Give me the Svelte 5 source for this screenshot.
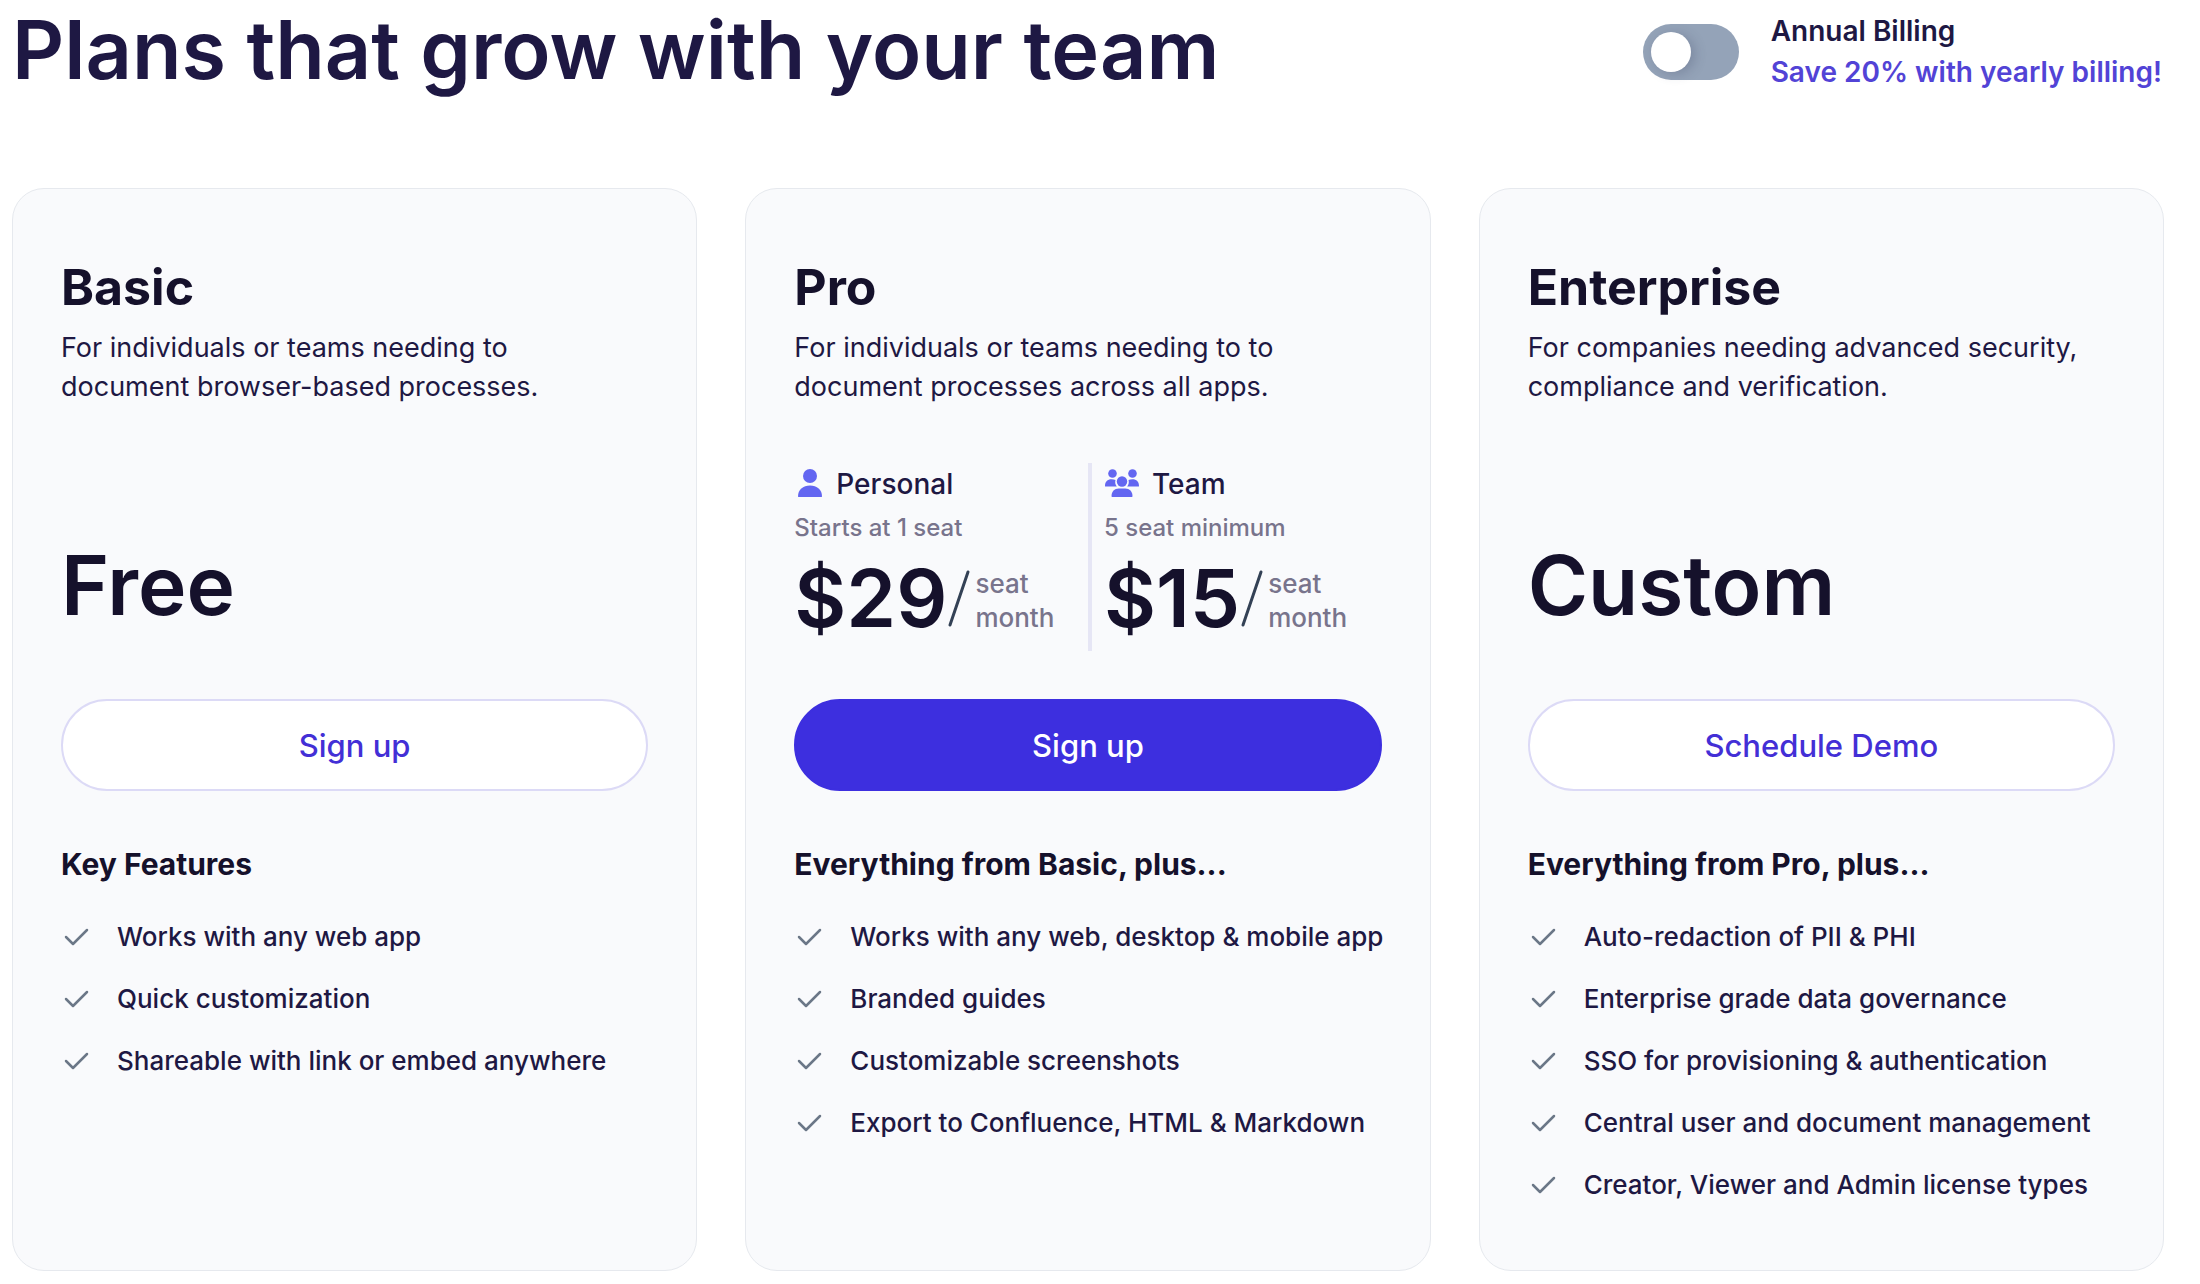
<script lang="ts">
	/**
	 * Pricing page
	 * Header with billing toggle, followed by the three plan cards
	 */

	interface Seat {
		icon: 'person' | 'group';
		label: string;
		note: string;
		price: string;
	}

	interface Plan {
		name: string;
		description: string;
		price?: string;
		seats?: Seat[];
		cta: string;
		primary?: boolean;
		featuresTitle: string;
		features: string[];
	}

	const plans: Plan[] = [
		{
			name: 'Basic',
			description: 'For individuals or teams needing to document browser-based processes.',
			price: 'Free',
			cta: 'Sign up',
			featuresTitle: 'Key Features',
			features: ['Works with any web app', 'Quick customization', 'Shareable with link or embed anywhere']
		},
		{
			name: 'Pro',
			description: 'For individuals or teams needing to to document processes across all apps.',
			seats: [
				{ icon: 'person', label: 'Personal', note: 'Starts at 1 seat', price: '$29' },
				{ icon: 'group', label: 'Team', note: '5 seat minimum', price: '$15' }
			],
			cta: 'Sign up',
			primary: true,
			featuresTitle: 'Everything from Basic, plus...',
			features: [
				'Works with any web, desktop & mobile app',
				'Branded guides',
				'Customizable screenshots',
				'Export to Confluence, HTML & Markdown'
			]
		},
		{
			name: 'Enterprise',
			description: 'For companies needing advanced security, compliance and verification.',
			price: 'Custom',
			cta: 'Schedule Demo',
			featuresTitle: 'Everything from Pro, plus...',
			features: [
				'Auto-redaction of PII & PHI',
				'Enterprise grade data governance',
				'SSO for provisioning & authentication',
				'Central user and document management',
				'Creator, Viewer and Admin license types'
			]
		}
	];

	let annual = $state(false);
</script>

<main class="pricing">
	<header class="pricing-header">
		<h1>Plans that grow with your team</h1>
		<label class="billing">
			<input class="toggle" type="checkbox" role="switch" bind:checked={annual} />
			<span class="billing-text">
				<span>Annual Billing</span>
				<span class="billing-save">Save 20% with yearly billing!</span>
			</span>
		</label>
	</header>

	<div class="plans">
		{#each plans as plan}
			<section class="plan">
				<h2>{plan.name}</h2>
				<p class="description">{plan.description}</p>

				<div class="pricing-area">
					{#if plan.seats}
						{#each plan.seats as seat}
							<div class="seat">
								<div class="seat-label">
									{#if seat.icon === 'person'}
										<svg class="seat-icon person" viewBox="0 0 30 32" aria-hidden="true">
											<circle cx="16" cy="8" r="7" />
											<path d="M4 28.500C4 21.500 9 17.500 16 17.500s12 4 12 11c0 .300-.200.500-.500.500h-23c-.300 0-.500-.200-.500-.500z" />
										</svg>
									{:else}
										<svg class="seat-icon group" viewBox="0 0 36 32" aria-hidden="true">
											<circle cx="8.500" cy="5.500" r="4.300" />
											<circle cx="28.500" cy="5.500" r="4.300" />
											<circle cx="18" cy="13.500" r="5.200" />
											<path d="M1 18c0-4.500 2.500-6.800 6.500-6.800 1.600 0 2.900.300 4 .900-.700 2.300-.200 4.600 1.300 6.500H1.600c-.400 0-.600-.200-.600-.600z" />
											<path d="M35 18c0-4.500-2.500-6.800-6.500-6.800-1.600 0-2.900.300-4 .900.700 2.300.200 4.600-1.300 6.500h11.200c.400 0 .600-.200.600-.600z" />
											<path d="M7.500 28.300c0-5 3-7.800 7.200-7.800h6.600c4.200 0 7.200 2.800 7.200 7.800 0 .400-.300.700-.700.700H8.200c-.400 0-.700-.300-.700-.700z" />
										</svg>
									{/if}
									{seat.label}
								</div>
								<div class="seat-note">{seat.note}</div>
								<div class="seat-price">
									<span class="amount">{seat.price}</span>
									<svg class="slash" viewBox="0 0 24 60" aria-hidden="true">
										<path d="M3 57L21 4" />
									</svg>
									<span class="unit">
										<span>seat</span>
										<span>month</span>
									</span>
								</div>
							</div>
						{/each}
					{:else}
						<span class="amount flat">{plan.price}</span>
					{/if}
				</div>

				<button class="cta" class:primary={plan.primary} type="button">{plan.cta}</button>

				<h3>{plan.featuresTitle}</h3>
				<ul class="features">
					{#each plan.features as feature}
						<li>
							<svg class="check" viewBox="0 0 32 32" aria-hidden="true">
								<path d="M5 16l7 7L26 9" />
							</svg>
							{feature}
						</li>
					{/each}
				</ul>
			</section>
		{/each}
	</div>
</main>

<style>
	:global(body) {
		margin: 0;
		background: #fff;
	}

	.pricing {
		padding: 0 36px 12px 12px;
		font-family: Inter, 'Liberation Sans', sans-serif;
		color: #1e1843;
	}

	h1,
	h2,
	h3,
	p,
	ul {
		margin: 0;
		padding: 0;
	}

	/* Header */
	.pricing-header {
		display: flex;
		align-items: center;
		justify-content: space-between;
		min-height: 104px;
		margin-bottom: 84px;
	}

	h1 {
		align-self: flex-start;
		font-size: 81px;
		line-height: 100px;
		font-weight: 600;
	}

	.billing {
		display: flex;
		align-items: center;
		gap: 32px;
		padding-right: 2px;
		font-size: 28px;
		line-height: 41px;
		font-weight: 600;
		cursor: pointer;
	}

	.billing-text {
		display: flex;
		flex-direction: column;
	}

	.billing-save {
		color: #5243d6;
	}

	.toggle {
		appearance: none;
		flex: none;
		width: 96px;
		height: 56px;
		margin: 0;
		padding: 8px;
		border-radius: 28px;
		background: #94a3b8;
		cursor: pointer;
	}

	.toggle::before {
		content: '';
		display: block;
		width: 40px;
		height: 40px;
		border-radius: 50%;
		background: #fff;
		box-shadow: 4px 2px 12px rgba(50, 60, 90, 0.25);
		transition: transform 0.2s ease;
	}

	.toggle:checked {
		background: #3d2fdf;
	}

	.toggle:checked::before {
		transform: translateX(40px);
	}

	/* Plan cards */
	.plans {
		display: grid;
		grid-template-columns: repeat(3, minmax(0, 1fr));
		gap: 48px;
	}

	.plan {
		display: flex;
		flex-direction: column;
		padding: 68px 48px 66px;
		border: 1px solid #e6e9ee;
		border-radius: 32px;
		background: #f9fafc;
	}

	h2 {
		font-size: 50px;
		line-height: 60px;
		font-weight: 700;
		color: #15112b;
	}

	.description {
		max-width: 560px;
		margin-top: 11px;
		font-size: 27px;
		line-height: 39px;
	}

	.pricing-area {
		display: flex;
		align-items: flex-end;
		height: 188px;
		margin: 57px 0 48px;
	}

	.amount {
		font-size: 80px;
		line-height: 82px;
		font-weight: 600;
		color: #15112b;
	}

	.flat {
		padding-bottom: 24px;
		font-size: 82px;
	}

	.seat {
		box-sizing: border-box;
		flex: 0 0 50%;
		height: 100%;
		padding-top: 3px;
	}

	.seat + .seat {
		padding-left: 12px;
		border-left: 4px solid #e6e6f5;
	}

	.seat-label {
		display: flex;
		align-items: center;
		gap: 12px;
		font-size: 28px;
		line-height: 36px;
		font-weight: 500;
	}

	.seat-icon {
		height: 32px;
		fill: #6366f1;
	}

	.person {
		width: 30px;
	}

	.group {
		width: 36px;
	}

	.seat-note {
		margin-top: 10px;
		font-size: 24px;
		line-height: 32px;
		font-weight: 500;
		color: #78748c;
	}

	.seat-price {
		display: flex;
		align-items: center;
		margin-top: 13px;
	}

	.slash {
		width: 24px;
		height: 60px;
		fill: none;
		stroke: #334155;
		stroke-width: 3;
		stroke-linecap: round;
	}

	.unit {
		display: flex;
		flex-direction: column;
		padding: 5px 0 0 4px;
		font-size: 26px;
		line-height: 34px;
		font-weight: 500;
		color: #78748c;
	}

	.cta {
		height: 92px;
		border: 2px solid #dcdaf6;
		border-radius: 46px;
		background: #fff;
		font-family: inherit;
		font-size: 31px;
		font-weight: 500;
		color: #432fd6;
		cursor: pointer;
	}

	.primary {
		border-color: #3d2fdf;
		background: #3d2fdf;
		color: #fff;
	}

	/* Feature list */
	h3 {
		margin-top: 54px;
		font-size: 30px;
		line-height: 38px;
		font-weight: 700;
		color: #15112b;
	}

	.features {
		display: flex;
		flex-direction: column;
		gap: 24px;
		margin-top: 35px;
		list-style: none;
		font-size: 26px;
		line-height: 38px;
		font-weight: 500;
		white-space: nowrap;
	}

	.features li {
		display: flex;
		align-items: center;
		gap: 24px;
	}

	.check {
		flex: none;
		width: 32px;
		height: 32px;
		fill: none;
		stroke: #6b7787;
		stroke-width: 2.5;
		stroke-linecap: round;
		stroke-linejoin: round;
	}
</style>
